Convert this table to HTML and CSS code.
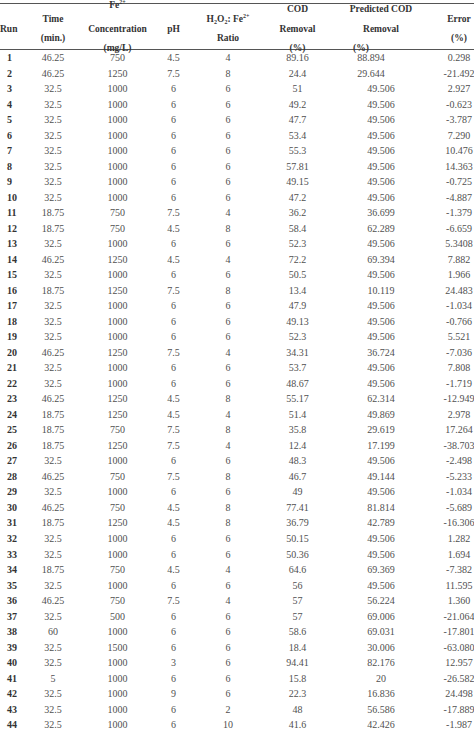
FILE: index.html
```html
<!DOCTYPE html>
<html>
<head>
<meta charset="utf-8">
<link rel="stylesheet" href="styles.css">
</head>
<body>
<div class="table">
  <div class="head">
    <div class="h h-run"><span>Run</span></div>
    <div class="h"><span>Time</span><span>(min.)</span></div>
    <div class="h"><span class="up">Fe<sup class="sup">2+</sup></span><span>Concentration</span><span>(mg/L)</span></div>
    <div class="h"><span>pH</span></div>
    <div class="h"><span>H<sub class="sub">2</sub>O<sub class="sub">2</sub>: Fe<sup class="sup">2+</sup></span><span>Ratio</span></div>
    <div class="h"><span>COD</span><span>Removal</span><span>(%)</span></div>
    <div class="h"><span>Predicted COD</span><span>Removal</span><span class="pct-left">(%)</span></div>
    <div class="h"><span>Error</span><span>(%)</span></div>
  </div>
  <div class="body">
    <div class="row"><span class="run">1</span><span>46.25</span><span>750</span><span>4.5</span><span>4</span><span>89.16</span><span class="shift">88.894</span><span>0.298</span></div>
    <div class="row"><span class="run">2</span><span>46.25</span><span>1250</span><span>7.5</span><span>8</span><span>24.4</span><span class="shift">29.644</span><span>-21.492</span></div>
    <div class="row"><span class="run">3</span><span>32.5</span><span>1000</span><span>6</span><span>6</span><span>51</span><span>49.506</span><span>2.927</span></div>
    <div class="row"><span class="run">4</span><span>32.5</span><span>1000</span><span>6</span><span>6</span><span>49.2</span><span>49.506</span><span>-0.623</span></div>
    <div class="row"><span class="run">5</span><span>32.5</span><span>1000</span><span>6</span><span>6</span><span>47.7</span><span>49.506</span><span>-3.787</span></div>
    <div class="row"><span class="run">6</span><span>32.5</span><span>1000</span><span>6</span><span>6</span><span>53.4</span><span>49.506</span><span>7.290</span></div>
    <div class="row"><span class="run">7</span><span>32.5</span><span>1000</span><span>6</span><span>6</span><span>55.3</span><span>49.506</span><span>10.476</span></div>
    <div class="row"><span class="run">8</span><span>32.5</span><span>1000</span><span>6</span><span>6</span><span>57.81</span><span>49.506</span><span>14.363</span></div>
    <div class="row"><span class="run">9</span><span>32.5</span><span>1000</span><span>6</span><span>6</span><span>49.15</span><span>49.506</span><span>-0.725</span></div>
    <div class="row"><span class="run">10</span><span>32.5</span><span>1000</span><span>6</span><span>6</span><span>47.2</span><span>49.506</span><span>-4.887</span></div>
    <div class="row"><span class="run">11</span><span>18.75</span><span>750</span><span>7.5</span><span>4</span><span>36.2</span><span>36.699</span><span>-1.379</span></div>
    <div class="row"><span class="run">12</span><span>18.75</span><span>750</span><span>4.5</span><span>8</span><span>58.4</span><span>62.289</span><span>-6.659</span></div>
    <div class="row"><span class="run">13</span><span>32.5</span><span>1000</span><span>6</span><span>6</span><span>52.3</span><span>49.506</span><span>5.3408</span></div>
    <div class="row"><span class="run">14</span><span>46.25</span><span>1250</span><span>4.5</span><span>4</span><span>72.2</span><span>69.394</span><span>7.882</span></div>
    <div class="row"><span class="run">15</span><span>32.5</span><span>1000</span><span>6</span><span>6</span><span>50.5</span><span>49.506</span><span>1.966</span></div>
    <div class="row"><span class="run">16</span><span>18.75</span><span>1250</span><span>7.5</span><span>8</span><span>13.4</span><span>10.119</span><span>24.483</span></div>
    <div class="row"><span class="run">17</span><span>32.5</span><span>1000</span><span>6</span><span>6</span><span>47.9</span><span>49.506</span><span>-1.034</span></div>
    <div class="row"><span class="run">18</span><span>32.5</span><span>1000</span><span>6</span><span>6</span><span>49.13</span><span>49.506</span><span>-0.766</span></div>
    <div class="row"><span class="run">19</span><span>32.5</span><span>1000</span><span>6</span><span>6</span><span>52.3</span><span>49.506</span><span>5.521</span></div>
    <div class="row"><span class="run">20</span><span>46.25</span><span>1250</span><span>7.5</span><span>4</span><span>34.31</span><span>36.724</span><span>-7.036</span></div>
    <div class="row"><span class="run">21</span><span>32.5</span><span>1000</span><span>6</span><span>6</span><span>53.7</span><span>49.506</span><span>7.808</span></div>
    <div class="row"><span class="run">22</span><span>32.5</span><span>1000</span><span>6</span><span>6</span><span>48.67</span><span>49.506</span><span>-1.719</span></div>
    <div class="row"><span class="run">23</span><span>46.25</span><span>1250</span><span>4.5</span><span>8</span><span>55.17</span><span>62.314</span><span>-12.949</span></div>
    <div class="row"><span class="run">24</span><span>18.75</span><span>1250</span><span>4.5</span><span>4</span><span>51.4</span><span>49.869</span><span>2.978</span></div>
    <div class="row"><span class="run">25</span><span>18.75</span><span>750</span><span>7.5</span><span>8</span><span>35.8</span><span>29.619</span><span>17.264</span></div>
    <div class="row"><span class="run">26</span><span>18.75</span><span>1250</span><span>7.5</span><span>4</span><span>12.4</span><span>17.199</span><span>-38.703</span></div>
    <div class="row"><span class="run">27</span><span>32.5</span><span>1000</span><span>6</span><span>6</span><span>48.3</span><span>49.506</span><span>-2.498</span></div>
    <div class="row"><span class="run">28</span><span>46.25</span><span>750</span><span>7.5</span><span>8</span><span>46.7</span><span>49.144</span><span>-5.233</span></div>
    <div class="row"><span class="run">29</span><span>32.5</span><span>1000</span><span>6</span><span>6</span><span>49</span><span>49.506</span><span>-1.034</span></div>
    <div class="row"><span class="run">30</span><span>46.25</span><span>750</span><span>4.5</span><span>8</span><span>77.41</span><span>81.814</span><span>-5.689</span></div>
    <div class="row"><span class="run">31</span><span>18.75</span><span>1250</span><span>4.5</span><span>8</span><span>36.79</span><span>42.789</span><span>-16.306</span></div>
    <div class="row"><span class="run">32</span><span>32.5</span><span>1000</span><span>6</span><span>6</span><span>50.15</span><span>49.506</span><span>1.282</span></div>
    <div class="row"><span class="run">33</span><span>32.5</span><span>1000</span><span>6</span><span>6</span><span>50.36</span><span>49.506</span><span>1.694</span></div>
    <div class="row"><span class="run">34</span><span>18.75</span><span>750</span><span>4.5</span><span>4</span><span>64.6</span><span>69.369</span><span>-7.382</span></div>
    <div class="row"><span class="run">35</span><span>32.5</span><span>1000</span><span>6</span><span>6</span><span>56</span><span>49.506</span><span>11.595</span></div>
    <div class="row"><span class="run">36</span><span>46.25</span><span>750</span><span>7.5</span><span>4</span><span>57</span><span>56.224</span><span>1.360</span></div>
    <div class="row"><span class="run">37</span><span>32.5</span><span>500</span><span>6</span><span>6</span><span>57</span><span>69.006</span><span>-21.064</span></div>
    <div class="row"><span class="run">38</span><span>60</span><span>1000</span><span>6</span><span>6</span><span>58.6</span><span>69.031</span><span>-17.801</span></div>
    <div class="row"><span class="run">39</span><span>32.5</span><span>1500</span><span>6</span><span>6</span><span>18.4</span><span>30.006</span><span>-63.080</span></div>
    <div class="row"><span class="run">40</span><span>32.5</span><span>1000</span><span>3</span><span>6</span><span>94.41</span><span>82.176</span><span>12.957</span></div>
    <div class="row"><span class="run">41</span><span>5</span><span>1000</span><span>6</span><span>6</span><span>15.8</span><span>20</span><span>-26.582</span></div>
    <div class="row"><span class="run">42</span><span>32.5</span><span>1000</span><span>9</span><span>6</span><span>22.3</span><span>16.836</span><span>24.498</span></div>
    <div class="row"><span class="run">43</span><span>32.5</span><span>1000</span><span>6</span><span>2</span><span>48</span><span>56.586</span><span>-17.889</span></div>
    <div class="row"><span class="run">44</span><span>32.5</span><span>1000</span><span>6</span><span>10</span><span>41.6</span><span>42.426</span><span>-1.987</span></div>
  </div>
</div>
</body>
</html>
```

FILE: styles.css
```css
html, body {
  margin: 0;
  padding: 0;
  background: #ffffff;
  overflow: hidden;
}

body {
  width: 474px;
  font-family: "Liberation Serif", "Times New Roman", serif;
  color: #505050;
}

.table {
  width: 483px;
  margin-top: 3px;
}

.head,
.row {
  display: grid;
  grid-template-columns: 30px 46px 83px 29px 80px 59px 108px 48px;
}

.head {
  height: 45px;
  border-top: 1px solid #555555;
  border-bottom: 1px solid #555555;
}

.h {
  display: flex;
  flex-direction: column;
  align-items: center;
  justify-content: center;
  gap: 9.5px;
  padding-bottom: 2px;
  font-size: 9.5px;
  font-weight: bold;
  line-height: 10px;
  color: #333333;
  white-space: nowrap;
}

.h-run {
  align-items: flex-start;
}

.up {
  transform: translateY(-4px);
}

.pct-left {
  padding-right: 40px;
}

.sup {
  font-size: 6px;
  line-height: 0;
  vertical-align: 4px;
}

.sub {
  font-size: 6px;
  line-height: 0;
  vertical-align: -2px;
}

.row {
  height: 15.53px;
  font-size: 10px;
  line-height: 15.53px;
  white-space: nowrap;
}

.row span {
  text-align: center;
}

.row .run {
  text-align: left;
  padding-left: 7px;
  font-weight: bold;
  color: #333333;
}

.row .shift {
  padding-right: 20px;
}
```
